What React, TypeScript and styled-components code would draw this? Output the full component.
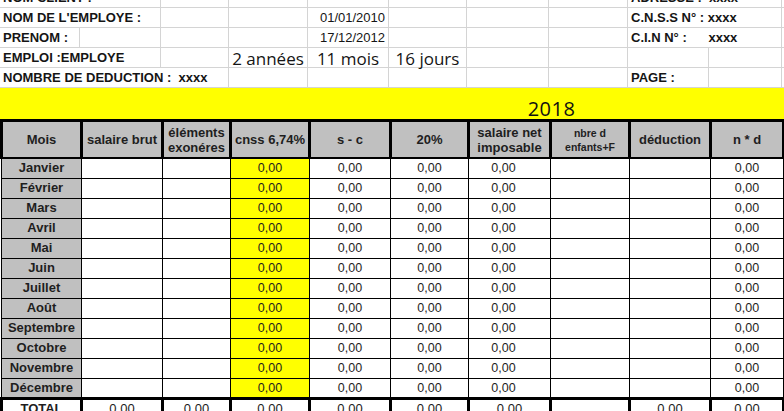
import React from "react";
import styled, { createGlobalStyle } from "styled-components";

const GlobalStyle = createGlobalStyle`
  html, body { margin: 0; padding: 0; background: #fff; }
  body { font-family: "Liberation Sans", Arial, sans-serif; color: #111; }
`;

const COLS = "80px 81px 68px 79px 81px 78px 82px 79px 81px 73px 2px";
const WIDTHS = [80, 81, 68, 79, 81, 78, 82, 79, 81, 73];

const Page = styled.div`
  width: 784px;
  height: 411px;
  overflow: hidden;
`;

const Sheet = styled.div`
  margin-top: -12px;
`;

const InfoGrid = styled.div`
  display: grid;
  grid-template-columns: ${COLS};
  grid-auto-rows: 20px;
`;

const InfoCell = styled.div<{ $span?: number; $align?: string; $big?: boolean; $plain?: boolean }>`
  grid-column: span ${(p) => p.$span ?? 1};
  box-sizing: border-box;
  display: flex;
  align-items: flex-end;
  justify-content: ${(p) => (p.$align === "right" ? "flex-end" : p.$align === "center" ? "center" : "flex-start")};
  border-right: 1px solid #d4d4d4;
  border-bottom: 1px solid #d4d4d4;
  padding: 0 3px ${(p) => (p.$big ? "0" : "1px")} 3px;
  white-space: pre;
  overflow: visible;
  font-size: ${(p) => (p.$big ? "17px" : "13px")};
  font-weight: ${(p) => (p.$big || p.$plain ? 400 : 700)};
  font-family: ${(p) => (p.$big ? '"Open Sans", "Noto Sans", sans-serif' : '"Liberation Sans", Arial, sans-serif')};
  line-height: 16px;
  color: #151515;
`;

const YearBar = styled.div`
  display: grid;
  grid-template-columns: ${COLS};
  height: 31px;
  background: #ffff00;
`;

const YearLabel = styled.div`
  grid-column: 7 / span 2;
  align-self: end;
  padding-left: 8px;
  text-align: center;
  font-family: "Open Sans", "Noto Sans", sans-serif;
  font-size: 20px;
  line-height: 21px;
  letter-spacing: 0.5px;
  color: #111;
`;

const PayTable = styled.table`
  border-collapse: collapse;
  table-layout: fixed;
  width: 782px;
  font-family: "Liberation Sans", Arial, sans-serif;
`;

const HeadCell = styled.th<{ $small?: boolean }>`
  background: #c0c0c0;
  border: 3px solid #000;
  border-bottom-width: 2px;
  height: 35px;
  padding: 0;
  font-weight: 700;
  font-size: ${(p) => (p.$small ? "10.5px" : "13px")};
  line-height: ${(p) => (p.$small ? "14px" : "15px")};
  color: #1e1e1e;
  text-align: center;
  vertical-align: middle;
`;

const BodyRow = styled.tr`
  height: 20px;
`;

const MonthCell = styled.td`
  background: #c0c0c0;
  border: 1px solid #000;
  padding: 0;
  font-weight: 700;
  font-size: 13px;
  line-height: 18px;
  text-align: center;
  color: #1e1e1e;
`;

const ValueCell = styled.td<{ $yellow?: boolean; $shift?: number }>`
  background: ${(p) => (p.$yellow ? "#ffff00" : "#fff")};
  border: 1px solid #000;
  padding: 0 ${(p) => p.$shift ?? 0}px 0 0;
  font-size: 12.5px;
  line-height: 18px;
  text-align: center;
  color: #1e1e1e;
`;

const TotalRow = styled.tr`
  height: 22px;
`;

const TotalCell = styled.td<{ $label?: boolean }>`
  background: #fff;
  border: 3px solid #000;
  border-bottom: none;
  padding: 0;
  font-size: 13px;
  font-weight: ${(p) => (p.$label ? 700 : 400)};
  line-height: 18px;
  text-align: center;
  vertical-align: top;
  color: #1e1e1e;
`;

const months = [
  "Janvier",
  "Février",
  "Mars",
  "Avril",
  "Mai",
  "Juin",
  "Juillet",
  "Août",
  "Septembre",
  "Octobre",
  "Novembre",
  "Décembre",
];

export default function App() {
  return (
    <Page>
      <GlobalStyle />
      <Sheet>
        <InfoGrid>
          <InfoCell $span={2}>NOM CLIENT :</InfoCell>
          <InfoCell />
          <InfoCell />
          <InfoCell />
          <InfoCell />
          <InfoCell />
          <InfoCell />
          <InfoCell $span={2}>ADRESSE :  xxxx</InfoCell>
          <InfoCell />

          <InfoCell $span={2}>NOM DE L'EMPLOYE :</InfoCell>
          <InfoCell />
          <InfoCell />
          <InfoCell $plain $align="right">01/01/2010</InfoCell>
          <InfoCell />
          <InfoCell />
          <InfoCell />
          <InfoCell $span={2}>C.N.S.S N° : xxxx</InfoCell>
          <InfoCell />

          <InfoCell>PRENOM :</InfoCell>
          <InfoCell />
          <InfoCell />
          <InfoCell />
          <InfoCell $plain $align="right">17/12/2012</InfoCell>
          <InfoCell />
          <InfoCell />
          <InfoCell />
          <InfoCell $span={2}>{"C.I.N N° :      xxxx"}</InfoCell>
          <InfoCell />

          <InfoCell $span={2}>EMPLOI :EMPLOYE</InfoCell>
          <InfoCell />
          <InfoCell $big $align="center">2 années</InfoCell>
          <InfoCell $big $align="center">11 mois</InfoCell>
          <InfoCell $big $align="center">16 jours</InfoCell>
          <InfoCell />
          <InfoCell />
          <InfoCell />
          <InfoCell />
          <InfoCell />

          <InfoCell $span={3}>{"NOMBRE DE DEDUCTION :  xxxx"}</InfoCell>
          <InfoCell />
          <InfoCell />
          <InfoCell />
          <InfoCell />
          <InfoCell />
          <InfoCell>PAGE :</InfoCell>
          <InfoCell />
          <InfoCell />
        </InfoGrid>

        <YearBar>
          <YearLabel>2018</YearLabel>
        </YearBar>

        <PayTable>
          <colgroup>
            {WIDTHS.map((w, i) => (
              <col key={i} style={{ width: w }} />
            ))}
          </colgroup>
          <thead>
            <tr>
              <HeadCell>Mois</HeadCell>
              <HeadCell>salaire brut</HeadCell>
              <HeadCell>
                éléments
                <br />
                exonéres
              </HeadCell>
              <HeadCell>cnss 6,74%</HeadCell>
              <HeadCell>s - c</HeadCell>
              <HeadCell>20%</HeadCell>
              <HeadCell>
                salaire net
                <br />
                imposable
              </HeadCell>
              <HeadCell $small>
                nbre d<br />
                enfants+F
              </HeadCell>
              <HeadCell>déduction</HeadCell>
              <HeadCell>n * d</HeadCell>
            </tr>
          </thead>
          <tbody>
            {months.map((m) => (
              <BodyRow key={m}>
                <MonthCell>{m}</MonthCell>
                <ValueCell />
                <ValueCell />
                <ValueCell $yellow>0,00</ValueCell>
                <ValueCell>0,00</ValueCell>
                <ValueCell>0,00</ValueCell>
                <ValueCell $shift={12}>0,00</ValueCell>
                <ValueCell />
                <ValueCell />
                <ValueCell>0,00</ValueCell>
              </BodyRow>
            ))}
            <TotalRow>
              <TotalCell $label>TOTAL</TotalCell>
              <TotalCell>0,00</TotalCell>
              <TotalCell>0,00</TotalCell>
              <TotalCell>0,00</TotalCell>
              <TotalCell>0,00</TotalCell>
              <TotalCell>0,00</TotalCell>
              <TotalCell>0,00</TotalCell>
              <TotalCell />
              <TotalCell>0,00</TotalCell>
              <TotalCell>0,00</TotalCell>
            </TotalRow>
          </tbody>
        </PayTable>
      </Sheet>
    </Page>
  );
}
